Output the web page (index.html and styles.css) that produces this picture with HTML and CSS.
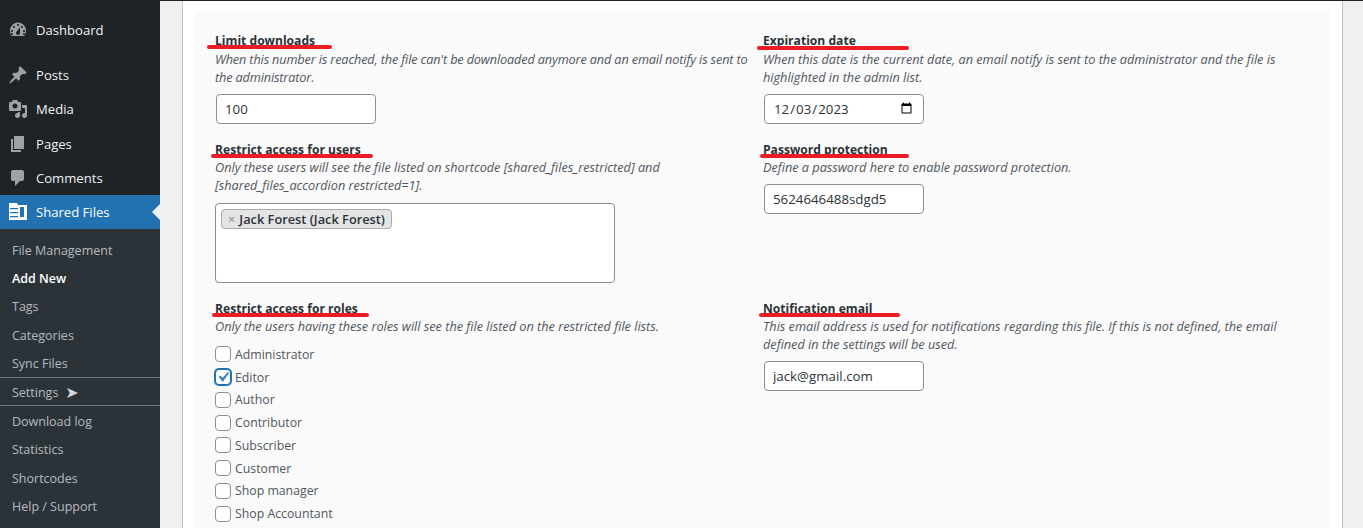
FILE: index.html
```html
<!DOCTYPE html>
<html lang="en">
<head>
<meta charset="utf-8">
<title>Add New Shared File</title>
<link rel="stylesheet" href="styles.css">
</head>
<body>
<div class="page">
  <nav class="sidebar">
    <ul class="menu">
      <li class="item item-first">
        <svg class="ico" viewBox="0 0 20 20"><path fill-rule="evenodd" d="M3.760 16h12.480c1.100-1.430 1.760-3.210 1.760-5.140 0-4.630-3.580-8.360-8-8.360s-8 3.730-8 8.360c0 1.930.66 3.710 1.760 5.140zM10 4c.55 0 1 .45 1 1s-.45 1-1 1-1-.45-1-1 .45-1 1-1zM6 6c.55 0 1 .45 1 1s-.45 1-1 1-1-.45-1-1 .45-1 1-1zm8 0c.55 0 1 .45 1 1s-.45 1-1 1-1-.45-1-1 .45-1 1-1zm-5.370 5.550L12 7v6c0 1.100-.9 2-2 2s-2-.9-2-2c0-.57.24-1.080.63-1.450zM4 10c.55 0 1 .45 1 1s-.45 1-1 1-1-.45-1-1 .45-1 1-1zm12 0c.55 0 1 .45 1 1s-.45 1-1 1-1-.45-1-1 .45-1 1-1zm-12 3c.55 0 1 .45 1 1s-.45 1-1 1-1-.45-1-1 .45-1 1-1zm12 0c.55 0 1 .45 1 1s-.45 1-1 1-1-.45-1-1 .45-1 1-1z"/></svg>
        <span>Dashboard</span>
      </li>
      <li class="item item-gap">
        <svg class="ico" viewBox="0 0 20 20"><path d="M10.440 3.020l1.820-1.820 6.360 6.350-1.830 1.820c-1.050-.68-2.480-.57-3.410.36l-.75.75c-.92.93-1.040 2.350-.35 3.410l-1.830 1.820-2.410-2.410-2.800 2.790c-.42.42-3.380 2.710-3.800 2.290s1.860-3.390 2.280-3.810l2.790-2.790L4.100 9.390l1.830-1.820c1.050.69 2.480.57 3.400-.35l.75-.75c.93-.92 1.040-2.350.36-3.410z"/></svg>
        <span>Posts</span>
      </li>
      <li class="item">
        <svg class="ico" viewBox="0 0 20 20"><path fill-rule="evenodd" d="M13 11V4c0-.55-.45-1-1-1h-1.670L9 1H5L3.670 3H2c-.55 0-1 .45-1 1v7c0 .55.45 1 1 1h10c.55 0 1-.45 1-1zM7 4.500c1.380 0 2.500 1.120 2.500 2.500S8.380 9.500 7 9.500 4.500 8.380 4.500 7 5.620 4.500 7 4.500zM14 6h5v10.500c0 1.380-1.120 2.500-2.500 2.500S14 17.880 14 16.500s1.120-2.500 2.500-2.500c.17 0 .34.020.5.050V9h-3V6zm-4 8.050V13h2v3.500c0 1.380-1.120 2.500-2.500 2.500S7 17.880 7 16.500 8.120 14 9.500 14c.17 0 .34.020.5.050z"/></svg>
        <span>Media</span>
      </li>
      <li class="item">
        <svg class="ico" viewBox="0 0 20 20"><path d="M6 15V2h10v13H6zm-1 1h8v2H3V5h2v11z"/></svg>
        <span>Pages</span>
      </li>
      <li class="item">
        <svg class="ico" viewBox="0 0 20 20"><path d="M5 2h9c1.100 0 2 .9 2 2v7c0 1.100-.9 2-2 2h-2l-5 5v-5H5c-1.100 0-2-.9-2-2V4c0-1.100.9-2 2-2z"/></svg>
        <span>Comments</span>
      </li>
      <li class="item item-active">
        <svg class="ico" viewBox="0 0 20 20"><path fill-rule="evenodd" d="M1 1h8l1 2h9v15H1zM2 6v1.300h8V6zm0 4v1.300h8V10zm0 4v1.300h8V14zM12 5v10h4V5z"/></svg>
        <span>Shared Files</span>
      </li>
    </ul>
    <ul class="submenu">
      <li class="sub">File Management</li>
      <li class="sub sub-current">Add New</li>
      <li class="sub">Tags</li>
      <li class="sub">Categories</li>
      <li class="sub">Sync Files</li>
      <li class="sub sub-divided">Settings <span class="arrow">➤</span></li>
      <li class="sub">Download log</li>
      <li class="sub">Statistics</li>
      <li class="sub">Shortcodes</li>
      <li class="sub">Help / Support</li>
    </ul>
  </nav>
  <main class="content">
    <section class="card">
      <div class="panel">
        <div class="grid">
          <div class="field field-top">
            <label class="label">Limit downloads<i class="mark mark-1"></i></label>
            <p class="desc desc-tight">When this number is reached, the file can't be downloaded anymore and an email notify is sent to the administrator.</p>
            <input class="input" type="number" value="100">
          </div>
          <div class="field field-top">
            <label class="label">Expiration date<i class="mark mark-2"></i></label>
            <p class="desc">When this date is the current date, an email notify is sent to the administrator and the file is highlighted in the admin list.</p>
            <input class="input" type="date" value="2023-12-03">
          </div>
          <div class="field">
            <label class="label">Restrict access for users<i class="mark mark-3"></i></label>
            <p class="desc">Only these users will see the file listed on shortcode [shared_files_restricted] and [shared_files_accordion restricted=1].</p>
            <div class="multi"><span class="tag"><span class="tag-x">×</span>Jack Forest (Jack Forest)</span></div>
          </div>
          <div class="field">
            <label class="label">Password protection<i class="mark mark-4"></i></label>
            <p class="desc">Define a password here to enable password protection.</p>
            <input class="input" type="text" value="5624646488sdgd5">
          </div>
          <div class="field">
            <label class="label">Restrict access for roles<i class="mark mark-5"></i></label>
            <p class="desc">Only the users having these roles will see the file listed on the restricted file lists.</p>
            <ul class="roles">
              <li class="role"><input class="check" type="checkbox"><span>Administrator</span></li>
              <li class="role"><input class="check" type="checkbox" checked><span>Editor</span></li>
              <li class="role"><input class="check" type="checkbox"><span>Author</span></li>
              <li class="role"><input class="check" type="checkbox"><span>Contributor</span></li>
              <li class="role"><input class="check" type="checkbox"><span>Subscriber</span></li>
              <li class="role"><input class="check" type="checkbox"><span>Customer</span></li>
              <li class="role"><input class="check" type="checkbox"><span>Shop manager</span></li>
              <li class="role"><input class="check" type="checkbox"><span>Shop Accountant</span></li>
            </ul>
          </div>
          <div class="field">
            <label class="label">Notification email<i class="mark mark-6"></i></label>
            <p class="desc">This email address is used for notifications regarding this file. If this is not defined, the email defined in the settings will be used.</p>
            <input class="input" type="text" value="jack@gmail.com">
          </div>
        </div>
      </div>
    </section>
  </main>
</div>
</body>
</html>
```
FILE: styles.css
```css
* { box-sizing: border-box; }
html, body { margin: 0; padding: 0; height: 528px; overflow: hidden; }
body { font-family: "Open Sans", "Noto Sans", sans-serif; font-size: 12px; color: #3c434a; background: #f0f0f1; }
ul { list-style: none; margin: 0; padding: 0; }
.page { display: flex; height: 528px; overflow: hidden; }

.sidebar { width: 160px; flex: none; background: #1d2327; height: 528px; padding-top: 13px; }
.menu { display: flex; flex-direction: column; }
.item { position: relative; display: flex; align-items: center; height: 34.2px; padding-left: 8px; color: #f0f0f1; font-size: 13.1px; }
.item span { margin-left: 8px; }
.item-gap { margin-top: 11px; }
.ico { width: 20px; height: 20px; fill: #9ca2a7; flex: none; }
.item-active { background: #2271b1; color: #fff; }
.item-active .ico { fill: #fff; }
.item-active::after { content: ""; position: absolute; right: 0; top: 50%; margin-top: -8px; border: 8px solid transparent; border-right-color: #f0f0f1; border-left-width: 0; }
.submenu { background: #2c3338; padding-top: 7px; height: 299px; }
.sub { height: 28.35px; display: flex; align-items: center; gap: 7px; padding-left: 12px; color: rgba(240, 246, 252, 0.7); font-size: 12.5px; }
.sub-current { color: #fff; font-weight: 600; }
.sub-divided { height: 29.4px; margin: -0.75px 0 0.7px; padding-top: 1px; border-top: 1px solid #73777b; border-bottom: 1px solid #73777b; }
.arrow { font-size: 16px; color: #d5d7d9; font-family: "DejaVu Sans", sans-serif; }

.content { flex: 1; min-width: 0; border-top: 1px solid #1d2327; padding-left: 22px; padding-right: 20px; }
.card { height: 560px; background: #fff; border-left: 1px solid #c3c4c7; border-right: 1px solid #c3c4c7; padding: 10px 12px 0; }
.panel { height: 100%; background: #fafafa; padding: 21px 0 0 20px; }
.grid { display: grid; grid-template-columns: 548px 1fr; grid-template-rows: 109px 159px auto; }
.field { min-width: 0; }
.label { position: relative; display: block; font-weight: 700; font-size: 12.1px; line-height: 17px; color: #2c3338; }
.mark { position: absolute; display: block; height: 4px; top: 13px; background: #ed1c24; border-radius: 2px; }
.mark-1 { left: -8px; width: 125px; }
.mark-2 { left: -6px; width: 152px; top: 14px; }
.mark-3 { left: -4px; width: 162px; }
.mark-4 { left: -3px; width: 149px; }
.mark-5 { left: -3px; width: 157px; }
.mark-6 { left: -4px; width: 141px; }
.desc { margin: 0; width: 550px; font-style: italic; font-size: 12.7px; line-height: 18px; color: #50575e; }
.field-top .desc { margin-top: 1px; }
.desc-tight { letter-spacing: -0.14px; }
.input { display: block; width: 160px; height: 30px; margin: 8px 0 0 1px; padding: 0 8px; border: 1px solid #8c8f94; border-radius: 4px; background: #fff; color: #2c3338; font: 13.3px "Open Sans", sans-serif; }
.multi { width: 400px; height: 80px; margin-top: 9px; padding: 5px; background: #fff; border: 1px solid #8c8f94; border-radius: 4px; }
.tag { display: inline-flex; align-items: center; height: 20px; padding: 0 6px; background: #e4e4e4; border: 1px solid #aaa; border-radius: 4px; font-size: 12.8px; font-weight: 600; color: #2c3338; }
.tag-x { margin-right: 4px; color: #888; font-weight: 400; }
.roles { margin-top: 8px; display: flex; flex-direction: column; }
.role { display: flex; align-items: center; height: 22.75px; gap: 4px; font-size: 12.3px; color: #50575e; }
.check { appearance: none; width: 16px; height: 16px; margin: 0; background: #fff; border: 1px solid #8c8f94; border-radius: 4px; flex: none; }
.check:checked { border-color: #2271b1; box-shadow: 0 0 0 1px #2271b1; background: #fff url("data:image/svg+xml,%3Csvg xmlns='http://www.w3.org/2000/svg' viewBox='0 0 20 20'%3E%3Cpath fill='%233582c4' d='M14.830 4.890l1.340.94-5.810 8.380H9.020L5.780 9.670l1.340-1.250 2.570 2.400z'/%3E%3C/svg%3E") center / 20px no-repeat; }
```
